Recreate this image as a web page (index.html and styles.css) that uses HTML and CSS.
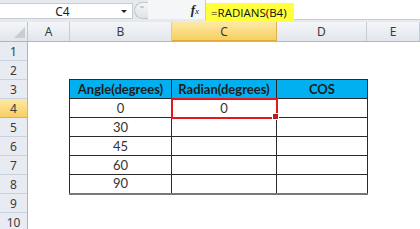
FILE: index.html
```html
<!DOCTYPE html>
<html lang="en">
<head>
  <meta charset="UTF-8">
  <title>RADIANS</title>
  <link rel="stylesheet" href="styles.css">
</head>
<body>
  <div class="formula-bar">
    <div class="name-box"><span class="name">C4</span><span class="drop"></span></div>
    <div class="splitter"><span class="dot"></span></div>
    <div class="fx"><i>f</i><span class="x">x</span></div>
    <div class="formula"><span class="hl">=RADIANS(B4)</span></div>
  </div>

  <div class="col-heads">
    <div class="corner"><span class="tri"></span></div>
    <div class="ch col-a">A</div>
    <div class="ch col-b">B</div>
    <div class="ch col-c active">C</div>
    <div class="ch col-d">D</div>
    <div class="ch col-e">E</div>
  </div>

  <div class="sheet">
    <div class="row-heads">
      <div class="rh">1</div>
      <div class="rh">2</div>
      <div class="rh">3</div>
      <div class="rh active">4</div>
      <div class="rh">5</div>
      <div class="rh">6</div>
      <div class="rh">7</div>
      <div class="rh">8</div>
      <div class="rh">9</div>
      <div class="rh">10</div>
    </div>
    <div class="cells">
      <table class="data">
        <colgroup>
          <col class="w-b">
          <col class="w-c">
          <col class="w-d">
        </colgroup>
        <tr class="head">
          <th>Angle(degrees)</th>
          <th>Radian(degrees)</th>
          <th>COS</th>
        </tr>
        <tr>
          <td>0</td>
          <td class="selected">0</td>
          <td></td>
        </tr>
        <tr><td>30</td><td></td><td></td></tr>
        <tr><td>45</td><td></td><td></td></tr>
        <tr><td>60</td><td></td><td></td></tr>
        <tr class="last"><td>90</td><td></td><td></td></tr>
      </table>
    </div>
  </div>
</body>
</html>
```

FILE: styles.css
```css
* {
  box-sizing: border-box;
}
body {
  margin: 0;
  width: 420px;
  height: 229px;
  overflow: hidden;
  background-color: #fff;
  font-family: "Noto Sans", sans-serif;
  color: #333;
}

/* formula bar */
.formula-bar {
  display: flex;
  align-items: flex-start;
  height: 22px;
  background-color: #e6e9ed;
}
.name-box {
  display: flex;
  align-items: center;
  width: 133px;
  height: 16px;
  margin-top: 3px;
  background-color: #fff;
  border: 1px solid #c6ccd4;
  border-left: none;
}
.name {
  flex: 1;
  text-align: center;
  font-size: 12px;
  color: #222;
  padding-left: 4px;
}
.drop {
  width: 0;
  height: 0;
  margin-right: 5px;
  border-left: 3px solid transparent;
  border-right: 3px solid transparent;
  border-top: 3px solid #222;
}
.splitter {
  width: 14px;
  height: 17px;
  margin-top: 2px;
  margin-left: 1px;
  border: 1px solid #bfc6cf;
  border-right: none;
  border-radius: 9px 0 0 9px;
  background: linear-gradient(#f4f5f7, #dfe3e8);
  display: flex;
  justify-content: center;
  padding-top: 3px;
}
.dot {
  width: 4px;
  height: 2px;
  background-color: #c3c8cf;
  border-radius: 1px;
}
.fx {
  width: 57px;
  height: 19px;
  background-color: #f5f6f7;
  text-align: right;
  padding-right: 6px;
  font-family: "Liberation Serif", serif;
  font-size: 13px;
  line-height: 19px;
  color: #222;
}
.fx i {
  font-weight: bold;
}
.fx .x {
  font-size: 9px;
  font-style: italic;
}
.formula {
  flex: 1;
  height: 20px;
  background-color: #fff;
  border-left: 1px solid #c6ccd4;
  border-bottom: 1px solid #c6ccd4;
}
.hl {
  display: inline-block;
  height: 20px;
  line-height: 20px;
  padding: 0 7px 0 5px;
  background-color: #ffff3c;
  color: #111;
  font-family: "Open Sans", sans-serif;
  font-size: 11.5px;
}

/* column headers */
.col-heads {
  display: flex;
  height: 20px;
  border-bottom: 1px solid #a9b8c8;
}
.corner {
  width: 28px;
  background: linear-gradient(#f3f5f8, #e2e6ec);
  border-right: 1px solid #bcc6d2;
  display: flex;
  justify-content: flex-end;
  align-items: flex-end;
  padding: 0 2px 3px 0;
}
.tri {
  width: 0;
  height: 0;
  border-left: 11px solid transparent;
  border-bottom: 11px solid #c8cdd4;
}
.ch {
  text-align: center;
  font-size: 12px;
  line-height: 20px;
  color: #3a3a3a;
  background: linear-gradient(#f3f5f8, #e2e6ec);
  border-right: 1px solid #c3ccd7;
}
.ch.active {
  background: linear-gradient(#fde9a6, #f7cf60);
  border-right-color: #e0b050;
  border-bottom: 1px solid #e3a83a;
}
.col-a { width: 42px; }
.col-b { width: 102px; }
.col-c { width: 105px; }
.col-d { width: 90px; }
.col-e { flex: 1; }

/* sheet */
.sheet {
  display: flex;
}
.row-heads {
  width: 28px;
  background-color: #e8ecf2;
  border-right: 1px solid #a9b8c8;
}
.rh {
  height: 19px;
  text-align: center;
  font-size: 12px;
  line-height: 19px;
  color: #3a3a3a;
  border-bottom: 1px solid #c8d1dc;
}
.rh.active {
  background: linear-gradient(#fde9a6, #f7cf60);
  border-bottom-color: #e0b050;
}
.cells {
  flex: 1;
  padding-top: 37px;
  padding-left: 41px;
}

/* data table */
.data {
  border-collapse: collapse;
  table-layout: fixed;
  width: 298px;
  font-family: Lato, sans-serif;
  font-size: 13px;
}
.w-b { width: 102px; }
.w-c { width: 105px; }
.w-d { width: 91px; }
.data th,
.data td {
  height: 19px;
  padding: 0;
  text-align: center;
  border: 1px solid #2a2a2a;
  line-height: 17px;
}
.data th {
  background-color: #00b0f0;
  color: #1c1c1c;
  font-weight: bold;
}
.data td {
  color: #333;
}
.data .last td {
  border-bottom: 2px solid #777;
}
.data td.selected {
  position: relative;
  outline: 2px solid #e5161d;
  outline-offset: -1px;
}
.data td.selected::after {
  content: "";
  position: absolute;
  right: -3px;
  bottom: -3px;
  width: 5px;
  height: 5px;
  background-color: #b81c1c;
  border: 1px solid #fff;
}
```
